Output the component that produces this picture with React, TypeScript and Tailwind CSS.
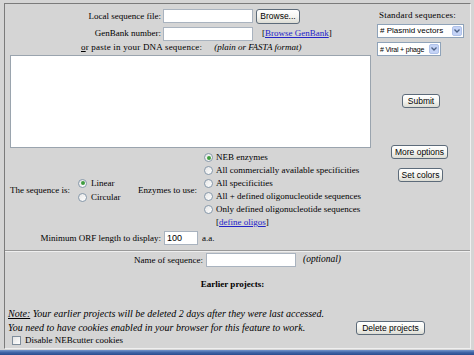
import type { ReactNode } from "react"

const sans = "font-[family-name:Liberation_Sans,Arial,sans-serif]"

function Btn({ children, className = "" }: { children: ReactNode; className?: string }) {
    return (
        <button
            className={`flex items-center justify-center rounded-[3px] border border-[#5d6b7a] bg-gradient-to-b from-white via-[#f6f6f2] to-[#dcdcd4] text-[8.5px] leading-none text-black ${sans} ${className}`}
        >
            {children}
        </button>
    )
}

function Radio({ on = false }: { on?: boolean }) {
    return (
        <span className="inline-flex w-[9px] h-[9px] shrink-0 items-center justify-center rounded-full border border-[#8799ab] bg-gradient-to-br from-[#e6e6e6] to-white">
            {on && <span className="w-[4px] h-[4px] rounded-full bg-[#3f9d3f]" />}
        </span>
    )
}

function Select({ label, className = "", textClass = "" }: { label: string; className?: string; textClass?: string }) {
    return (
        <div className={`flex h-[14px] items-center justify-between border border-[#8fa3b9] bg-white pl-[2px] pr-[1px] ${className}`}>
            <span className={`leading-none whitespace-nowrap ${sans} ${textClass}`}>{label}</span>
            <span className="flex w-[10px] h-[10px] shrink-0 items-center justify-center rounded-[2px] bg-[#c4d3f6] border border-[#b0c2ea]">
                <svg width="6" height="4" viewBox="0 0 6 4">
                    <path d="M0.5 0.5 L3 3 L5.5 0.5" fill="none" stroke="#4d6185" strokeWidth="1.3" />
                </svg>
            </span>
        </div>
    )
}

function Input({ className = "", value = "" }: { className?: string; value?: string }) {
    return (
        <div className={`flex items-center h-[14px] border border-[#a9b3bf] bg-white pl-[2px] text-[9px] leading-none ${sans} ${className}`}>
            {value}
        </div>
    )
}

export default function App() {
    return (
        <div className="w-[474px] h-[355px] overflow-hidden bg-[#d5d5d5] flex flex-col font-[family-name:Liberation_Serif,Times_New_Roman,serif] text-[9px] leading-none text-black">
            <div className="ml-[4px] mt-[3px] w-[467px] h-[346px] shrink-0 flex flex-col border border-t-[#7b7b7b] border-l-[#7b7b7b] border-r-[#f0f0f0] border-b-[#f0f0f0]">
                {/* Top section */}
                <div className="flex h-[246px]">
                    {/* Left column */}
                    <div className="w-[369px] flex flex-col">
                        <div className="mt-[4px] h-[16px] flex items-center">
                            <span className="w-[156px] text-right">Local sequence file:</span>
                            <Input className="ml-[2px] w-[90px]" />
                            <Btn className="ml-[3px] w-[44px] h-[15px]">Browse...</Btn>
                        </div>
                        <div className="mt-[3px] h-[13px] flex items-center">
                            <span className="w-[156px] text-right">GenBank number:</span>
                            <Input className="ml-[2px] w-[90px] h-[13px]" />
                            <span className="ml-[9px]">
                                [<span className="text-[#2323c8] underline">Browse GenBank</span>]
                            </span>
                        </div>
                        <div className="mt-[1px] h-[12px] flex items-center pl-[76px]">
                            <span className="tracking-[0.2px]">
                                <span className="underline">o</span>r paste in your DNA sequence:
                            </span>
                            <span className="ml-[12px] italic">(plain or FASTA format)</span>
                        </div>
                        <div className="ml-[5px] mt-[2px] w-[361px] h-[93px] border border-[#9aa4ae] bg-white" />

                        {/* Options */}
                        <div className="mt-[3px] h-[78px] flex items-center">
                            <span className="w-[73px] pl-[5px]">The sequence is:</span>
                            <div className="w-[60px] flex flex-col gap-[4px]">
                                <label className="flex items-center gap-[4px] h-[10px]">
                                    <Radio on />
                                    <span>Linear</span>
                                </label>
                                <label className="flex items-center gap-[4px] h-[10px]">
                                    <Radio />
                                    <span>Circular</span>
                                </label>
                            </div>
                            <span className="w-[66px]">Enzymes to use:</span>
                            <div className="flex flex-col">
                                {[
                                    "NEB enzymes",
                                    "All commercially available specificities",
                                    "All specificities",
                                    "All + defined oligonucleotide sequences",
                                    "Only defined oligonucleotide sequences",
                                ].map((t, i) => (
                                    <label key={t} className="flex items-center gap-[3px] h-[13px]">
                                        <Radio on={i === 0} />
                                        <span>{t}</span>
                                    </label>
                                ))}
                                <div className="h-[13px] flex items-center pl-[12px]">
                                    [<span className="text-[#2323c8] underline">define oligos</span>]
                                </div>
                            </div>
                        </div>
                        <div className="mt-[2px] h-[14px] flex items-center">
                            <span className="w-[156px] text-right">Minimum ORF length to display:</span>
                            <Input className="ml-[3px] w-[34px]" value="100" />
                            <span className="ml-[4px]">a.a.</span>
                        </div>
                    </div>

                    {/* Right column */}
                    <div className="flex-1 flex flex-col pl-[3px]">
                        <div className="mt-[5px] h-[12px] flex items-center pl-[2px] tracking-[0.2px]">Standard sequences:</div>
                        <Select label="# Plasmid vectors" className="mt-[3px] w-[87px]" textClass="text-[8px]" />
                        <Select label="# Viral + phage" className="mt-[4px] w-[64px]" textClass="text-[7px] tracking-[-0.2px]" />
                        <Btn className="mt-[38px] ml-[25px] w-[38px] h-[14px]">Submit</Btn>
                        <Btn className="mt-[37px] ml-[14px] w-[57px] h-[14px]">More options</Btn>
                        <Btn className="mt-[9px] ml-[21px] w-[45px] h-[14px]">Set colors</Btn>
                    </div>
                </div>

                {/* Divider */}
                <div className="border-t border-t-[#9a9a9a] border-b border-b-[#efefef]" />

                {/* Bottom section */}
                <div className="flex flex-col">
                    <div className="mt-[1px] h-[14px] flex items-center">
                        <span className="w-[198px] text-right">Name of sequence:</span>
                        <Input className="ml-[3px] w-[90px]" />
                        <span className="ml-[7px] italic text-[9.5px]">(optional)</span>
                    </div>
                    <div className="mt-[11px] h-[12px] flex items-center justify-center pr-[10px] font-bold">
                        Earlier projects:
                    </div>
                    <div className="mt-[18px] h-[12px] flex items-center pl-[3px] italic text-[10px]">
                        <span>
                            <span className="underline">Note:</span> Your earlier projects will be deleted 2 days after they were last accessed.
                        </span>
                    </div>
                    <div className="mt-[1px] h-[14px] flex items-center">
                        <span className="w-[351px] pl-[3px] italic text-[10px]">
                            You need to have cookies enabled in your browser for this feature to work.
                        </span>
                        <Btn className="w-[69px] h-[14px]">Delete projects</Btn>
                    </div>
                    <label className="h-[11px] flex items-center pl-[7px] gap-[4px]">
                        <span className="w-[9px] h-[9px] border border-[#7f8d9b] bg-gradient-to-br from-[#e4e4e4] to-white" />
                        <span>Disable NEBcutter cookies</span>
                    </label>
                </div>
            </div>
            <div className="mt-auto h-[5px] bg-gradient-to-b from-[#7596cc] via-[#3f64a6] to-[#2a4c8e]" />
        </div>
    )
}
